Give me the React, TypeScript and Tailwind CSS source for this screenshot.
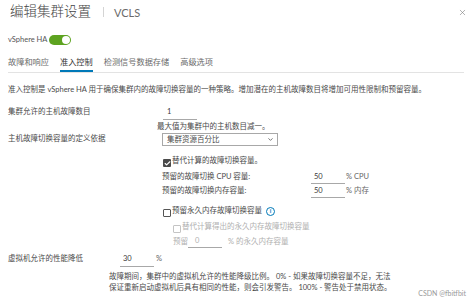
import { X, ChevronDown, Check } from "lucide-react";

const TABS = ["故障和响应", "准入控制", "检测信号数据存储", "高级选项"];

function Field({ value, pad = "pl-[3px]", muted = false }: { value: string; pad?: string; muted?: boolean }) {
  return (
    <span
      className={`flex h-full w-[34px] shrink-0 items-center border-b border-[#a8a8a8] ${pad} ${
        muted ? "text-[#b0b0b0]" : "text-[#3a3a3a]"
      }`}
    >
      {value}
    </span>
  );
}

function Box({ checked = false, disabled = false }: { checked?: boolean; disabled?: boolean }) {
  if (checked) {
    return (
      <span className="flex h-[8px] w-[8px] shrink-0 items-center justify-center self-end rounded-[1px] bg-[#4a4a4a]">
        <Check size={7} strokeWidth={4} className="text-white" />
      </span>
    );
  }
  return (
    <span
      className={`h-[8px] w-[8px] shrink-0 self-end rounded-[1px] border bg-white ${
        disabled ? "border-[#c4c4c4]" : "border-[#555]"
      }`}
    />
  );
}

export default function App() {
  return (
    <div className="relative h-[302px] w-[474px] overflow-hidden bg-white font-['Lato','Noto_Sans_CJK_SC',sans-serif] text-[7.5px] leading-none text-[#4a4a4a]">
      {/* header */}
      <div className="flex h-[24px] items-center pl-[10px] pr-[7px]">
        <span className="text-[13.5px] font-light text-[#444]">编辑集群设置</span>
        <span className="ml-[12px] h-[10px] w-px bg-[#d4d4d4]" />
        <span className="ml-[10px] text-[11px] text-[#6a6a6a]">VCLS</span>
        <X size={9} strokeWidth={1.5} className="ml-auto text-[#777]" />
      </div>

      <div className="flex flex-col pl-[8px]">
        <div className="mt-[10px] flex h-[12px] items-center gap-[2px]">
          <span className="text-[#555]">vSphere HA</span>
          <span className="flex h-[10px] w-[22px] items-center justify-end rounded-full bg-[#5da320] pr-[1px]">
            <span className="h-[8px] w-[8px] rounded-full bg-white" />
          </span>
        </div>

        {/* tabs */}
        <div className="mr-[10px] mt-[10px] flex gap-[11px] border-b border-[#e3e3e3]">
          {TABS.map((t, i) => (
            <div
              key={t}
              className={`h-[16px] border-b-2 text-[8.2px] leading-[12px] ${
                i === 1 ? "border-[#0079b8] text-[#333]" : "border-transparent text-[#6a6a6a]"
              }`}
            >
              {t}
            </div>
          ))}
        </div>

        <div className="mt-[12px] flex h-[10px] items-center">
          准入控制是 vSphere HA 用于确保集群内的故障切换容量的一种策略。增加潜在的主机故障数目将增加可用性限制和预留容量。
        </div>

        <div className="mt-[9px] flex h-[16px] items-center">
          <span className="w-[155px] shrink-0">集群允许的主机故障数目</span>
          <Field value="1" pad="pl-[4px]" />
        </div>
        <div className="mt-[2px] flex h-[10px] items-center pl-[149px]">最大值为集群中的主机数目减一。</div>

        <div className="flex h-[14px] items-center">
          <span className="w-[154px] shrink-0">主机故障切换容量的定义依据</span>
          <span className="flex h-[13px] w-[116px] items-center justify-between self-end border border-[#a8a8a8] pl-[4px] pr-[3px]">
            集群资源百分比
            <ChevronDown size={7} strokeWidth={2.5} className="text-[#444]" />
          </span>
        </div>

        <div className="mt-[9px] flex h-[12px] items-center gap-[1px] pl-[155px]">
          <Box checked />
          <span>替代计算的故障切换容量。</span>
        </div>

        <div className="mt-[3px] flex h-[14px] items-center pl-[154px]">
          <span className="w-[149px] shrink-0">预留的故障切换 CPU 容量:</span>
          <Field value="50" />
          <span className="ml-[1px] text-[#666]">% CPU</span>
        </div>
        <div className="flex h-[14px] items-center pl-[154px]">
          <span className="w-[149px] shrink-0">预留的故障切换内存容量:</span>
          <Field value="50" />
          <span className="ml-[1px] text-[#666]">% 内存</span>
        </div>

        <div className="mt-[7px] flex h-[12px] items-center gap-[1px] pl-[155px]">
          <Box />
          <span>预留永久内存故障切换容量</span>
          <span className="ml-[3px] flex h-[9px] w-[9px] items-center justify-center rounded-full border border-[#0079b8] text-[6px] font-bold text-[#0079b8]">
            i
          </span>
        </div>

        <div className="mt-[4px] flex h-[12px] items-center gap-[1px] pl-[165px] text-[#b0b0b0]">
          <Box disabled />
          <span>替代计算得出的永久内存故障切换容量</span>
        </div>

        <div className="mt-[2px] flex h-[13px] items-center pl-[165px] text-[#b0b0b0]">
          <span className="w-[15px] shrink-0">预留</span>
          <Field value="0" pad="pl-[7px]" muted />
          <span className="ml-[6px]">% 的永久内存容量</span>
        </div>

        <div className="mt-[3px] flex h-[16px] items-center">
          <span className="w-[112px] shrink-0">虚拟机允许的性能降低</span>
          <Field value="30" />
          <span className="ml-[2px] text-[#666]">%</span>
        </div>

        <div className="mt-[4px] flex h-[11px] items-center pl-[101px]">
          故障期间，集群中的虚拟机允许的性能降级比例。 0% - 如果故障切换容量不足，无法
        </div>
        <div className="flex h-[11px] items-center pl-[101px]">
          保证重新启动虚拟机后具有相同的性能，则会引发警告。 100% - 警告处于禁用状态。
        </div>
      </div>

      <span className="absolute bottom-[5px] right-[8px] text-[7px] text-[#9a9a9a]">CSDN @fbitfbit</span>
    </div>
  );
}
